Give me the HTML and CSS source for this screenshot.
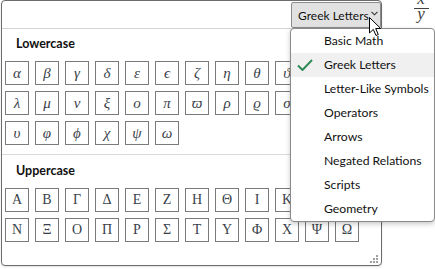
FILE: index.html
```html
<!DOCTYPE html>
<html lang="en">
<head>
    <meta charset="UTF-8">
    <title>Symbols</title>
    <link rel="stylesheet" href="styles.css">
</head>
<body>
<div class="stage">
    <div class="panel">
        <div class="panel-head">
            <div class="picker">
                <span>Greek Letters</span>
                <svg class="chev" width="7" height="5" viewBox="0 0 7 5"><path d="M0.5 0.8 L3.5 3.8 L6.5 0.8" fill="none" stroke="#333" stroke-width="1.1"/></svg>
            </div>
        </div>
        <div class="section">
            <div class="section-title">Lowercase</div>
            <div class="tiles lower">
                <span>α</span><span>β</span><span>γ</span><span>δ</span><span>ε</span><span>ϵ</span>
                <span>ζ</span><span>η</span><span>θ</span><span>ϑ</span><span>ι</span><span>κ</span>
                <span>λ</span><span>μ</span><span>ν</span><span>ξ</span><span>ο</span><span>π</span>
                <span>ϖ</span><span>ρ</span><span>ϱ</span><span>σ</span><span>ς</span><span>τ</span>
                <span>υ</span><span>φ</span><span>ϕ</span><span>χ</span><span>ψ</span><span>ω</span>
            </div>
        </div>
        <div class="section upper-section">
            <div class="section-title">Uppercase</div>
            <div class="tiles upper">
                <span>Α</span><span>Β</span><span>Γ</span><span>Δ</span><span>Ε</span><span>Ζ</span>
                <span>Η</span><span>Θ</span><span>Ι</span><span>Κ</span><span>Λ</span><span>Μ</span>
                <span>Ν</span><span>Ξ</span><span>Ο</span><span>Π</span><span>Ρ</span><span>Σ</span>
                <span>Τ</span><span>Υ</span><span>Φ</span><span>Χ</span><span>Ψ</span><span>Ω</span>
            </div>
        </div>
        <div class="panel-foot">
            <svg class="grip" width="8" height="8" viewBox="0 0 8 8" fill="#a0a0a0">
                <rect x="6" y="0" width="2" height="2"/>
                <rect x="3" y="3" width="2" height="2"/><rect x="6" y="3" width="2" height="2"/>
                <rect x="0" y="6" width="2" height="2"/><rect x="3" y="6" width="2" height="2"/><rect x="6" y="6" width="2" height="2"/>
            </svg>
        </div>
    </div>
    <div class="fraction">
        <span class="num">x</span>
        <span class="bar"></span>
        <span class="den">y</span>
    </div>

    <ul class="menu">
        <li>Basic Math</li>
        <li class="checked">
            <svg class="check" width="16" height="12" viewBox="0 0 16 12"><path d="M1 6.5 L5.5 11 L15 1" fill="none" stroke="#2e8b57" stroke-width="2"/></svg>
            Greek Letters
        </li>
        <li>Letter-Like Symbols</li>
        <li>Operators</li>
        <li>Arrows</li>
        <li>Negated Relations</li>
        <li>Scripts</li>
        <li>Geometry</li>
    </ul>

    <svg class="cursor" width="13" height="20" viewBox="0 0 13 20">
        <path d="M0.5 0.5 L0.5 16 L4.3 12.4 L7 18.5 L9.3 17.5 L6.7 11.5 L11.7 11.5 Z" fill="#fff" stroke="#000" stroke-width="1"/>
    </svg>
</div>
</body>
</html>
```

FILE: styles.css
```css
*{
    margin: 0;
    padding: 0;
    box-sizing: border-box;
}
li{
    list-style: none;
}
body{
    background: #fff;
    font-family: Lato, "Noto Sans", sans-serif;
    font-size: 12.2px;
    color: #111;
}
.stage{
    position: relative;
    width: 435px;
    height: 269px;
    display: flex;
    align-items: flex-start;
}
.panel{
    width: 381px;
    height: 266px;
    margin-left: 1px;
    border: 1px solid #6b6b6b;
    border-radius: 4px;
    background: #fff;
    display: flex;
    flex-direction: column;
    box-shadow: 0 1px 2px rgba(0,0,0,0.12);
}
.panel-head{
    height: 28px;
    border-bottom: 1px solid #d4d4d4;
    display: flex;
    justify-content: flex-end;
    align-items: flex-start;
}
.picker{
    width: 90px;
    height: 26px;
    margin-top: 1px;
    background: #e1e1e1;
    border: 1px solid #8c8c8c;
    border-radius: 2px;
    display: flex;
    align-items: center;
    padding-left: 6px;
    white-space: nowrap;
    font-size: 12px;
    color: #111;
}
.picker .chev{
    margin-left: 2px;
    margin-top: -3px;
}
.section{
    padding: 0 0 9px 0;
    border-bottom: 1px solid #d9d9d9;
}
.upper-section{
    border-bottom: none;
    padding-bottom: 0;
}
.section-title{
    padding: 7px 0 6px 14px;
    line-height: 16px;
    font-weight: bold;
    font-size: 12.5px;
    color: #111;
}
.upper-section .section-title{
    padding-top: 8px;
}
.tiles{
    display: grid;
    grid-template-columns: repeat(12, 24px);
    gap: 6px;
    padding: 3px 0 0 3px;
}
.tiles span{
    width: 24px;
    height: 24px;
    border: 1px solid #7a7a7a;
    display: flex;
    align-items: center;
    justify-content: center;
    font-family: "Liberation Serif", "DejaVu Serif", serif;
    font-size: 15px;
    color: #3a3f4a;
}
.tiles.lower span{
    font-style: italic;
}
.tiles.upper span{
    font-size: 14px;
}
.panel-foot{
    margin-top: auto;
    display: flex;
    justify-content: flex-end;
    padding: 0 3px 2px 0;
}
.fraction{
    margin: -8px 0 0 30px;
    width: 18px;
    display: flex;
    flex-direction: column;
    align-items: center;
    font-family: "Liberation Serif", "DejaVu Serif", serif;
    font-style: italic;
    font-size: 17px;
    line-height: 14px;
    color: #404040;
}
.fraction .num,
.fraction .den{
    height: 14px;
}
.fraction .bar{
    width: 15px;
    height: 1px;
    background: #404040;
    margin: 2px 0 -2px 0;
}
.menu{
    position: absolute;
    left: 290px;
    top: 28px;
    width: 145px;
    background: #fff;
    border: 1px solid #8a8a8a;
    border-radius: 4px;
    box-shadow: 0 2px 5px rgba(0,0,0,0.22);
    padding: 0;
}
.menu li{
    height: 24px;
    line-height: 24px;
    padding-left: 33px;
    color: #111;
    position: relative;
    white-space: nowrap;
}
.menu li.checked{
    background: #f0f0f0;
}
.menu .check{
    position: absolute;
    left: 6px;
    top: 6px;
}
.cursor{
    position: absolute;
    left: 369px;
    top: 17px;
}
```
